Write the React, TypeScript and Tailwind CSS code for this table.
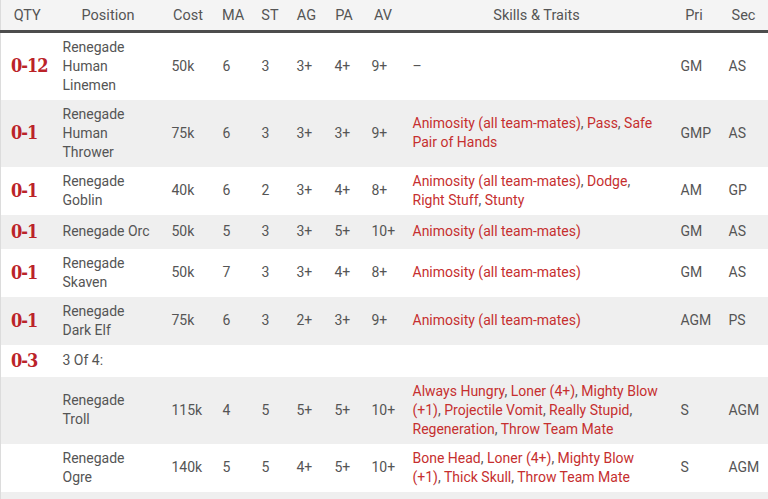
import React from "react";

type Row = {
  qty?: string;
  name: string;
  cost: string;
  ma: string;
  st: string;
  ag: string;
  pa: string;
  av: string;
  skills: string[];
  pri: string;
  sec: string;
};

const rows: Row[] = [
  { qty: "0-12", name: "Renegade Human Linemen", cost: "50k", ma: "6", st: "3", ag: "3+", pa: "4+", av: "9+", skills: [], pri: "GM", sec: "AS" },
  { qty: "0-1", name: "Renegade Human Thrower", cost: "75k", ma: "6", st: "3", ag: "3+", pa: "3+", av: "9+", skills: ["Animosity (all team-mates)", "Pass", "Safe Pair of Hands"], pri: "GMP", sec: "AS" },
  { qty: "0-1", name: "Renegade Goblin", cost: "40k", ma: "6", st: "2", ag: "3+", pa: "4+", av: "8+", skills: ["Animosity (all team-mates)", "Dodge", "Right Stuff", "Stunty"], pri: "AM", sec: "GP" },
  { qty: "0-1", name: "Renegade Orc", cost: "50k", ma: "5", st: "3", ag: "3+", pa: "5+", av: "10+", skills: ["Animosity (all team-mates)"], pri: "GM", sec: "AS" },
  { qty: "0-1", name: "Renegade Skaven", cost: "50k", ma: "7", st: "3", ag: "3+", pa: "4+", av: "8+", skills: ["Animosity (all team-mates)"], pri: "GM", sec: "AS" },
  { qty: "0-1", name: "Renegade Dark Elf", cost: "75k", ma: "6", st: "3", ag: "2+", pa: "3+", av: "9+", skills: ["Animosity (all team-mates)"], pri: "AGM", sec: "PS" },
];

const bigGuys: Row[] = [
  { name: "Renegade Troll", cost: "115k", ma: "4", st: "5", ag: "5+", pa: "5+", av: "10+", skills: ["Always Hungry", "Loner (4+)", "Mighty Blow (+1)", "Projectile Vomit", "Really Stupid", "Regeneration", "Throw Team Mate"], pri: "S", sec: "AGM" },
  { name: "Renegade Ogre", cost: "140k", ma: "5", st: "5", ag: "4+", pa: "5+", av: "10+", skills: ["Bone Head", "Loner (4+)", "Mighty Blow (+1)", "Thick Skull", "Throw Team Mate"], pri: "S", sec: "AGM" },
];

const headers = ["QTY", "Position", "Cost", "MA", "ST", "AG", "PA", "AV", "Skills & Traits", "Pri", "Sec"];
const widths = [53, 109, 51, 39, 35, 38, 37, 41, 266, 49, 50];

const qtyFont = { fontFamily: '"DejaVu Serif Condensed", "DejaVu Serif", serif' };

function Qty({ value }: { value: string }) {
  return (
    <span style={qtyFont} className="text-[18px] font-bold leading-[24px] tracking-[-1px] text-[#bb2329]">
      {value}
    </span>
  );
}

function Skills({ list }: { list: string[] }) {
  if (list.length === 0) return <span>–</span>;
  return (
    <>
      {list.map((s, i) => (
        <React.Fragment key={s}>
          <span className="text-[#c62f2f]">{s}</span>
          {i < list.length - 1 && ", "}
        </React.Fragment>
      ))}
    </>
  );
}

function PlayerRow({ row, shade }: { row: Row; shade: boolean }) {
  const cell = "px-[9px] py-[5px] align-middle";
  return (
    <tr className={shade ? "bg-[#efefef]" : "bg-white"}>
      <td className="pl-[10px] pr-0 py-[5px] align-middle">{row.qty && <Qty value={row.qty} />}</td>
      <td className={cell}>{row.name}</td>
      <td className={cell}>{row.cost}</td>
      <td className={cell}>{row.ma}</td>
      <td className={cell}>{row.st}</td>
      <td className={cell}>{row.ag}</td>
      <td className={cell}>{row.pa}</td>
      <td className={cell}>{row.av}</td>
      <td className={cell}>
        <Skills list={row.skills} />
      </td>
      <td className="pl-[11px] py-[5px] align-middle">{row.pri}</td>
      <td className="pl-[10px] py-[5px] align-middle">{row.sec}</td>
    </tr>
  );
}

export default function App() {
  return (
    <div className="h-[499px] w-[768px] overflow-hidden bg-[#efefef]" style={{ fontFamily: "Roboto, 'Liberation Sans', sans-serif" }}>
      <table className="w-[768px] table-fixed border-collapse border-l border-[#dcdcdc] text-[14px] leading-[19px] text-[#555]">
        <colgroup>
          {widths.map((w, i) => (
            <col key={i} style={{ width: w }} />
          ))}
        </colgroup>
        <thead>
          <tr className="h-[31px] bg-[#f4f4f4]">
            {headers.map((h) => (
              <th key={h} className="border-b-[3px] border-[#4d4d4d] pt-[1px] text-center align-middle text-[14.5px] font-normal text-[#555]">
                {h}
              </th>
            ))}
          </tr>
        </thead>
        <tbody>
          {rows.map((r, i) => (
            <PlayerRow key={r.name} row={r} shade={i % 2 === 1} />
          ))}
          <tr className="bg-white">
            <td className="pl-[10px] py-[4px] align-middle">
              <Qty value="0-3" />
            </td>
            <td colSpan={10} className="px-[9px] py-[4px] align-middle">
              3 Of 4:
            </td>
          </tr>
          {bigGuys.map((r, i) => (
            <PlayerRow key={r.name} row={r} shade={i % 2 === 0} />
          ))}
          <tr className="h-[40px] bg-[#efefef]">
            <td colSpan={11}></td>
          </tr>
        </tbody>
      </table>
    </div>
  );
}
